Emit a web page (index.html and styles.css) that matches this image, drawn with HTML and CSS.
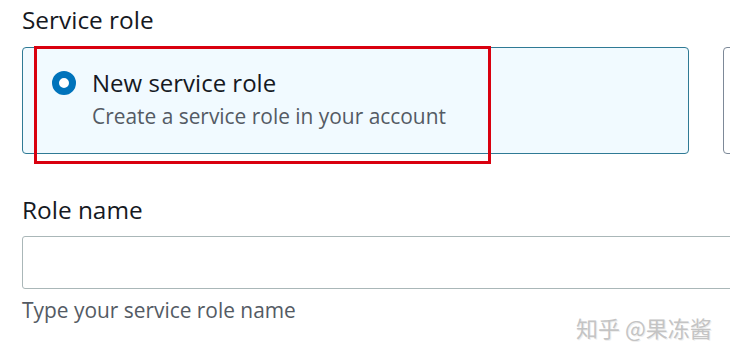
FILE: index.html
```html
<!DOCTYPE html>
<html lang="en">

<head>
    <meta charset="UTF-8">
    <meta name="viewport" content="width=device-width, initial-scale=1.0">
    <title>Service role</title>
    <link rel="stylesheet" href="styles.css">
</head>

<body>
    <div class="page">
        <div class="field">
            <p class="label">Service role</p>
            <div class="tiles">
                <div class="tile selected">
                    <span class="radio"></span>
                    <div class="tile-text">
                        <p class="tile-title">New service role</p>
                        <p class="tile-desc">Create a service role in your account</p>
                    </div>
                </div>
                <div class="tile"></div>
            </div>
        </div>

        <div class="field role">
            <p class="label">Role name</p>
            <input class="input" type="text">
            <p class="hint">Type your service role name</p>
        </div>

        <div class="mark"></div>
        <div class="watermark">知乎 @果冻酱</div>
    </div>
</body>

</html>
```

FILE: styles.css
```css
* {
    margin: 0;
    padding: 0;
    box-sizing: border-box;
}

body {
    width: 730px;
    height: 358px;
    overflow: hidden;
    background-color: #fff;
    font-family: "Open Sans", "Noto Sans", sans-serif;
    color: #16191f;
}

.page {
    position: relative;
    height: 358px;
    padding: 4px 0 0 22px;
    overflow: hidden;
}

.label {
    font-size: 24.4px;
    line-height: 32px;
    color: #16191f;
}

.tiles {
    display: grid;
    grid-template-columns: 667px 100px;
    gap: 34px;
    margin-top: 11px;
}

.tile {
    height: 107px;
    border: 1px solid #7d8998;
    border-radius: 4px;
    background-color: #fff;
}

.tile.selected {
    display: flex;
    gap: 16px;
    padding: 21px 0 0 29px;
    border-color: #2f7a95;
    background-color: #f1faff;
}

.radio {
    width: 24px;
    height: 24px;
    margin-top: 2px;
    border: 7.5px solid #0073bb;
    border-radius: 50%;
    background-color: #fff;
    flex-shrink: 0;
}

.tile-title {
    font-size: 24px;
    line-height: 28px;
}

.tile-desc {
    font-size: 20.9px;
    line-height: 28px;
    margin-top: 5px;
    color: #545b64;
}

.role {
    margin-top: 40px;
}

.input {
    display: block;
    width: 720px;
    height: 53px;
    margin-top: 10px;
    border: 1px solid #aab7b8;
    border-radius: 3px;
    background-color: #fff;
}

.hint {
    font-size: 20.9px;
    line-height: 28px;
    margin-top: 7px;
    color: #545b64;
}

.mark {
    position: absolute;
    left: 34px;
    top: 46px;
    width: 457px;
    height: 118px;
    border: 3px solid #d9000f;
}

.watermark {
    position: absolute;
    left: 576px;
    top: 311px;
    font-family: "Noto Sans CJK SC", sans-serif;
    font-size: 22px;
    color: #c4c4c4;
    text-shadow: 1px 1px 0 #eee;
}
```
